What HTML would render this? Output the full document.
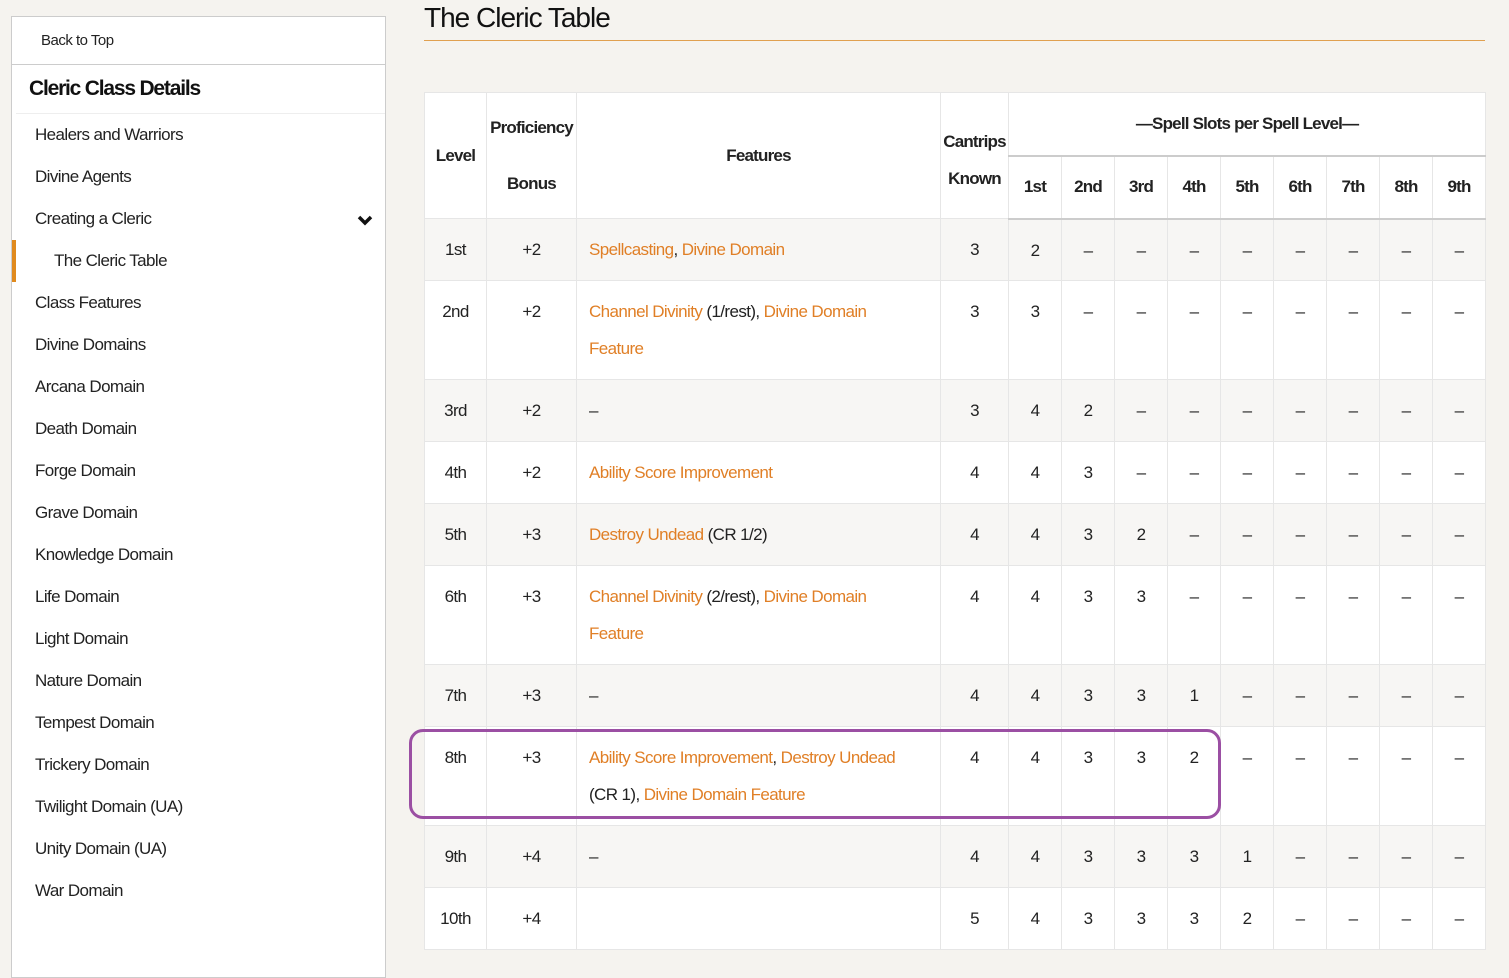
<!DOCTYPE html>
<html><head><meta charset="utf-8"><style>
body{margin:0;width:1509px;height:903px;overflow:hidden;background:#f5f3ef;font-family:"Liberation Sans",sans-serif;color:#222;position:relative}
.side{position:absolute;left:11px;top:16px;width:373px;height:960px;background:#fff;border:1px solid #ccc}
.btt{height:47px;border-bottom:1px solid #ccc;font-size:15px;line-height:47px;padding-left:29px;color:#222;letter-spacing:-0.5px}
.hd{height:48px;line-height:48px;font-weight:bold;font-size:21px;padding-left:13px;border-bottom:1px solid #eee;margin-left:4px;color:#111;letter-spacing:-1.2px}
.it{height:42px;line-height:42px;font-size:17px;padding-left:23px;position:relative;letter-spacing:-0.6px}
.it.sub{padding-left:42px}
.bar{position:absolute;left:0;top:0;width:4px;height:42px;background:#e08a1e}
.chev{position:absolute;right:12px;top:17px}
h1{position:absolute;left:424px;top:0;margin:0;font-weight:normal;font-size:28px;line-height:36px;color:#111;letter-spacing:-1px}
.rule{position:absolute;left:424px;top:40px;width:1061px;height:1px;background:#e0a050}
table{position:absolute;left:424px;top:92px;border-collapse:collapse;table-layout:fixed;width:1061px;font-size:17px;text-align:center;letter-spacing:-0.6px}
td,th{border:1px solid #e6e6e6;padding:0;vertical-align:top}
th{font-weight:bold;vertical-align:middle;background:#fff;font-size:17px;letter-spacing:-0.8px}
tbody tr:nth-child(odd) td{background:#f7f6f4}
tbody tr:nth-child(even) td{background:#fff}
td{line-height:37px;padding-top:12px}
td.f{text-align:left;padding-left:12px}
thead tr:last-child th{border-bottom:2px solid #ccc}
a{color:#e07f26;text-decoration:none}
.hl{position:absolute;left:409px;top:729px;width:806px;height:84px;border:3px solid #9b4fa3;border-radius:14px}
</style></head><body>
<div class="side">
<div class="btt">Back to Top</div>
<div class="hd">Cleric Class Details</div>
<div class="it">Healers and Warriors</div>
<div class="it">Divine Agents</div>
<div class="it">Creating a Cleric<svg class="chev" width="16" height="11" viewBox="0 0 16 11"><path d="M2 2L8 8L14 2" stroke="#111" stroke-width="3.5" fill="none"/></svg></div>
<div class="it sub"><div class="bar"></div>The Cleric Table</div>
<div class="it">Class Features</div>
<div class="it">Divine Domains</div>
<div class="it">Arcana Domain</div>
<div class="it">Death Domain</div>
<div class="it">Forge Domain</div>
<div class="it">Grave Domain</div>
<div class="it">Knowledge Domain</div>
<div class="it">Life Domain</div>
<div class="it">Light Domain</div>
<div class="it">Nature Domain</div>
<div class="it">Tempest Domain</div>
<div class="it">Trickery Domain</div>
<div class="it">Twilight Domain (UA)</div>
<div class="it">Unity Domain (UA)</div>
<div class="it">War Domain</div>
</div>
<h1>The Cleric Table</h1>
<div class="rule"></div>
<table>
<colgroup><col style="width:62px"><col style="width:90px"><col style="width:364px"><col style="width:68px"><col style="width:53px"><col style="width:53px"><col style="width:53px"><col style="width:53px"><col style="width:53px"><col style="width:53px"><col style="width:53px"><col style="width:53px"><col style="width:53px"></colgroup>
<thead>
<tr style="height:63px"><th rowspan="2">Level</th><th rowspan="2" style="line-height:56px">Proficiency<br>Bonus</th><th rowspan="2">Features</th><th rowspan="2" style="line-height:37px;padding-top:8px">Cantrips<br>Known</th><th colspan="9" style="border-bottom:2px solid #ccc">—Spell Slots per Spell Level—</th></tr>
<tr style="height:63px"><th>1st</th><th>2nd</th><th>3rd</th><th>4th</th><th>5th</th><th>6th</th><th>7th</th><th>8th</th><th>9th</th></tr>
</thead>
<tbody>
<tr style="height:62px"><td>1st</td><td>+2</td><td class="f"><a>Spellcasting</a>, <a>Divine Domain</a></td><td>3</td><td>2</td><td>–</td><td>–</td><td>–</td><td>–</td><td>–</td><td>–</td><td>–</td><td>–</td></tr>
<tr style="height:99px"><td>2nd</td><td>+2</td><td class="f"><a>Channel Divinity</a> (1/rest), <a>Divine Domain</a><br><a>Feature</a></td><td>3</td><td>3</td><td>–</td><td>–</td><td>–</td><td>–</td><td>–</td><td>–</td><td>–</td><td>–</td></tr>
<tr style="height:62px"><td>3rd</td><td>+2</td><td class="f">–</td><td>3</td><td>4</td><td>2</td><td>–</td><td>–</td><td>–</td><td>–</td><td>–</td><td>–</td><td>–</td></tr>
<tr style="height:62px"><td>4th</td><td>+2</td><td class="f"><a>Ability Score Improvement</a></td><td>4</td><td>4</td><td>3</td><td>–</td><td>–</td><td>–</td><td>–</td><td>–</td><td>–</td><td>–</td></tr>
<tr style="height:62px"><td>5th</td><td>+3</td><td class="f"><a>Destroy Undead</a> (CR 1/2)</td><td>4</td><td>4</td><td>3</td><td>2</td><td>–</td><td>–</td><td>–</td><td>–</td><td>–</td><td>–</td></tr>
<tr style="height:99px"><td>6th</td><td>+3</td><td class="f"><a>Channel Divinity</a> (2/rest), <a>Divine Domain</a><br><a>Feature</a></td><td>4</td><td>4</td><td>3</td><td>3</td><td>–</td><td>–</td><td>–</td><td>–</td><td>–</td><td>–</td></tr>
<tr style="height:62px"><td>7th</td><td>+3</td><td class="f">–</td><td>4</td><td>4</td><td>3</td><td>3</td><td>1</td><td>–</td><td>–</td><td>–</td><td>–</td><td>–</td></tr>
<tr style="height:99px"><td>8th</td><td>+3</td><td class="f"><a>Ability Score Improvement</a>, <a>Destroy Undead</a><br>(CR 1), <a>Divine Domain Feature</a></td><td>4</td><td>4</td><td>3</td><td>3</td><td>2</td><td>–</td><td>–</td><td>–</td><td>–</td><td>–</td></tr>
<tr style="height:62px"><td>9th</td><td>+4</td><td class="f">–</td><td>4</td><td>4</td><td>3</td><td>3</td><td>3</td><td>1</td><td>–</td><td>–</td><td>–</td><td>–</td></tr>
<tr style="height:62px"><td>10th</td><td>+4</td><td class="f"></td><td>5</td><td>4</td><td>3</td><td>3</td><td>3</td><td>2</td><td>–</td><td>–</td><td>–</td><td>–</td></tr>
</tbody>
</table>
<div class="hl"></div>
</body></html>
